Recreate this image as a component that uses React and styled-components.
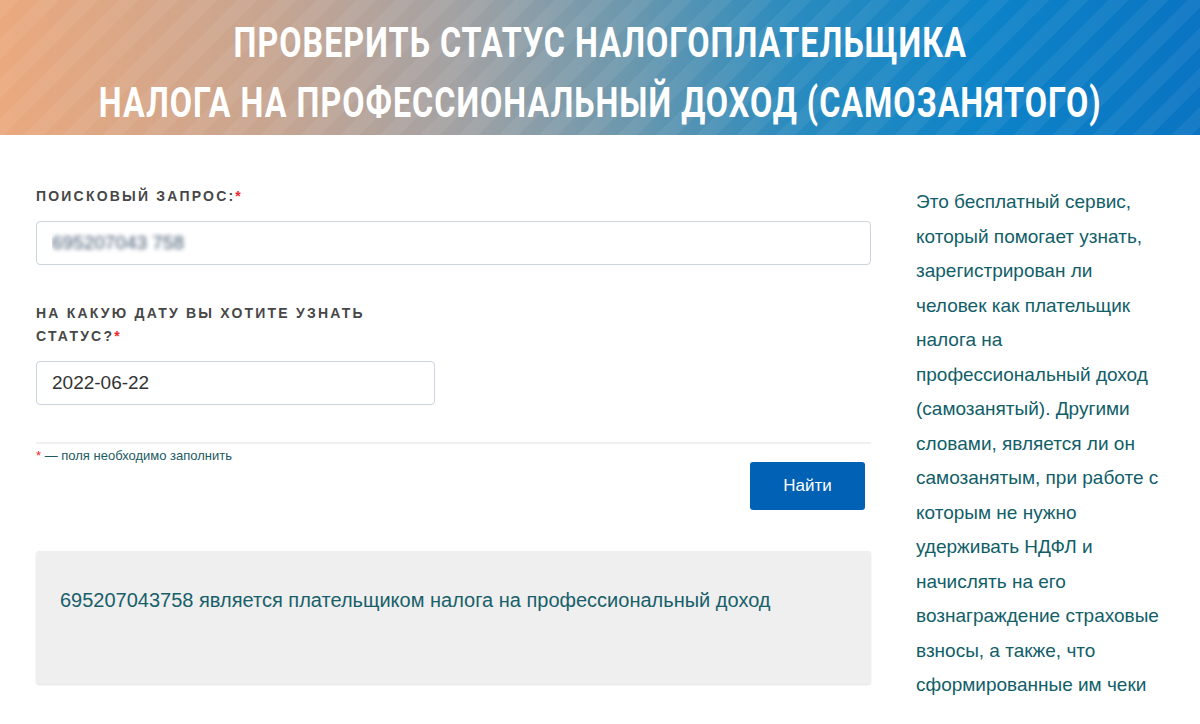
import React from 'react'
import styled, { createGlobalStyle } from 'styled-components'

const Global = createGlobalStyle`
  body {
    margin: 0;
    background: #fff;
    font-family: "Liberation Sans", Arial, sans-serif;
  }
  * { box-sizing: border-box; }
`

const Header = styled.header`
  height: 135px;
  position: relative;
  overflow: hidden;
  padding-top: 10px;
  background: linear-gradient(90deg, #eba97e 0%, #c8a590 22%, #a3a2a4 38%, #6d98ad 52%, #2a8bbe 66%, #0d83c8 82%, #0a74c2 100%);
  display: flex;
  flex-direction: column;
  align-items: center;
  justify-content: center;
  &::before {
    content: "";
    position: absolute;
    inset: 0;
    background: repeating-linear-gradient(
      135deg,
      rgba(255, 255, 255, 0.06) 0px,
      rgba(255, 255, 255, 0.06) 14px,
      rgba(255, 255, 255, 0) 14px,
      rgba(255, 255, 255, 0) 28px
    );
  }
`

const TitleLine = styled.h1`
  position: relative;
  margin: 0;
  color: #fff;
  font-family: Roboto, "Liberation Sans", sans-serif;
  font-weight: 700;
  font-size: 42px;
  line-height: 60px;
  letter-spacing: 1.3px;
  white-space: nowrap;
  transform: scaleX(0.77);
`

const Page = styled.main`
  display: flex;
  gap: 45px;
  padding: 50px 0 0 36px;
`

const FormColumn = styled.section`
  width: 835px;
  flex-shrink: 0;
`

const Sidebar = styled.aside`
  width: 252px;
  color: #115e68;
  font-size: 19px;
  line-height: 34.5px;
`

const Label = styled.label`
  display: block;
  max-width: ${p => p.narrow ? '400px' : 'none'};
  color: #474747;
  font-size: 14px;
  font-weight: 700;
  letter-spacing: 2.2px;
  line-height: 23px;
  text-transform: uppercase;
  margin-bottom: 13px;
`

const Star = styled.span`
  color: #e8262b;
`

const Field = styled.input`
  display: block;
  width: ${p => p.short ? '399px' : '100%'};
  height: 44px;
  padding: 0 15px;
  border: 1px solid #ccd4dc;
  border-radius: 4px;
  font-family: "Liberation Sans", Arial, sans-serif;
  font-size: 19px;
  color: #333;
  background: #fff;
  outline: none;
  &.blurred {
    color: transparent;
    text-shadow: 0 0 4px rgba(70, 90, 115, 1);
  }
`

const Group = styled.div`
  margin-bottom: 37px;
`

const Divider = styled.hr`
  border: 0;
  border-top: 2px solid #f0f0f0;
  margin: 0 0 4px;
`

const Note = styled.div`
  color: #1b5a62;
  font-size: 13px;
  line-height: 15px;
`

const Actions = styled.div`
  display: flex;
  justify-content: flex-end;
  padding-right: 6px;
  margin-top: -1px;
`

const Button = styled.button`
  width: 115px;
  height: 48px;
  border: 0;
  border-radius: 3px;
  background: #0061b5;
  color: #fff;
  font-family: "Liberation Sans", Arial, sans-serif;
  font-size: 17px;
  cursor: pointer;
`

const Result = styled.div`
  margin-top: 41px;
  height: 133px;
  background: #efefef;
  border-radius: 3px;
  box-shadow: 0 1px 2px rgba(0, 0, 0, 0.12);
  padding: 36px 24px;
  color: #17606a;
  font-size: 20px;
  line-height: 26px;
`

export default function App() {
  return (
    <>
      <Global />
      <Header>
        <TitleLine>ПРОВЕРИТЬ СТАТУС НАЛОГОПЛАТЕЛЬЩИКА</TitleLine>
        <TitleLine>НАЛОГА НА ПРОФЕССИОНАЛЬНЫЙ ДОХОД (САМОЗАНЯТОГО)</TitleLine>
      </Header>
      <Page>
        <FormColumn>
          <Group>
            <Label>Поисковый запрос:<Star>*</Star></Label>
            <Field className="blurred" defaultValue="695207043 758" readOnly />
          </Group>
          <Group>
            <Label narrow>На какую дату вы хотите узнать статус?<Star>*</Star></Label>
            <Field short defaultValue="2022-06-22" readOnly />
          </Group>
          <Divider />
          <Note><Star>*</Star> — поля необходимо заполнить</Note>
          <Actions>
            <Button>Найти</Button>
          </Actions>
          <Result>695207043758 является плательщиком налога на профессиональный доход</Result>
        </FormColumn>
        <Sidebar>
          Это бесплатный сервис, который помогает узнать, зарегистрирован ли человек как плательщик налога на профессиональный доход (самозанятый). Другими словами, является ли он самозанятым, при работе с которым не нужно удерживать НДФЛ и начислять на его вознаграждение страховые взносы, а также, что сформированные им чеки
        </Sidebar>
      </Page>
    </>
  )
}
